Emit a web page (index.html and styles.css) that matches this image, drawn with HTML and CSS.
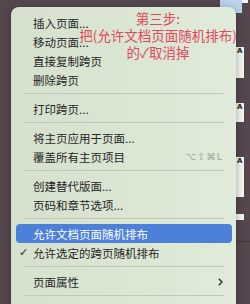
FILE: index.html
```html
<!DOCTYPE html>
<html lang="zh">
<head>
<meta charset="utf-8">
<link rel="stylesheet" href="styles.css">
</head>
<body>
<div class="screen">
  <div class="pages">
    <div class="thumb-blue"></div>
    <div class="thumb-white"></div>
    <div class="strip s1"><span>A</span></div>
    <div class="strip s2"><span>A</span></div>
    <div class="strip s3"><span>A</span></div>
    <div class="strip s4"></div>
    <div class="hline"></div>
  </div>
  <div class="menu">
    <div class="item">插入页面...</div>
    <div class="item">移动页面...</div>
    <div class="item">直接复制跨页</div>
    <div class="item">删除跨页</div>
    <div class="sep"></div>
    <div class="item">打印跨页...</div>
    <div class="sep"></div>
    <div class="item">将主页应用于页面...</div>
    <div class="item"><span class="label">覆盖所有主页项目</span><span class="shortcut">⌥⇧⌘L</span></div>
    <div class="sep"></div>
    <div class="item">创建替代版面...</div>
    <div class="item">页码和章节选项...</div>
    <div class="sep"></div>
    <div class="item active">允许文档页面随机排布</div>
    <div class="item"><span class="check">✓</span>允许选定的跨页随机排布</div>
    <div class="sep"></div>
    <div class="item"><span class="label">页面属性</span><svg class="chev" width="5" height="8" viewBox="0 0 5 8"><path d="M0.8 0.8 L4 4 L0.8 7.2" fill="none" stroke="#2a2a2a" stroke-width="1.3"/></svg></div>
    <div class="sep"></div>
  </div>
  <div class="note">
    <div>第三步:</div>
    <div>把(允许文档页面随机排布)</div>
    <div>的✓取消掉</div>
  </div>
</div>
</body>
</html>
```
FILE: styles.css
```css
html, body {
  margin: 0;
  padding: 0;
}
body {
  width: 250px;
  height: 304px;
  overflow: hidden;
  background: #56474f;
  font-family: "Noto Sans CJK SC", "Noto Sans", sans-serif;
}
.screen {
  position: relative;
  width: 250px;
  height: 304px;
  overflow: hidden;
  background: #56474f;
}
.pages {
  position: absolute;
  left: 215px;
  top: 0;
  width: 35px;
  height: 304px;
}
.thumb-blue {
  position: absolute;
  left: 5px;
  top: 0;
  width: 22px;
  height: 13px;
  background: #b9d3ea;
}
.thumb-white {
  position: absolute;
  left: 27px;
  top: 0;
  width: 6px;
  height: 3px;
  background: #f3f3f3;
}
.strip {
  position: absolute;
  left: 21px;
  width: 8px;
  background: #f4f6f0;
}
.strip span {
  display: block;
  font: bold 7px "DejaVu Sans", sans-serif;
  color: #222;
  padding-left: 1px;
  line-height: 8px;
}
.s1 { top: 47px; height: 31px; }
.s2 { top: 103px; height: 19px; }
.s3 { top: 157px; height: 40px; }
.s4 { top: 214px; height: 6px; }
.hline {
  position: absolute;
  left: 21px;
  top: 241px;
  width: 14px;
  height: 1px;
  background: #3e3339;
}
.menu {
  position: absolute;
  left: 11px;
  top: 7px;
  width: 225px;
  height: 310px;
  box-sizing: border-box;
  padding-top: 6px;
  border-radius: 8px;
  background: linear-gradient(90deg, #d6e1cd 0%, #dbe6d3 60%, #e0ebd9 100%);
  box-shadow: 0 2px 8px rgba(0, 0, 0, 0.35);
}
.item {
  position: relative;
  display: flex;
  align-items: center;
  height: 19px;
  margin: 0 4px 0 5px;
  padding: 0 9px 0 17px;
  border-radius: 4px;
  font-size: 11.5px;
  color: #262626;
  white-space: nowrap;
}
.item .label {
  flex: 1;
}
.item.active {
  background: #4d80d8;
  color: #ffffff;
}
.check {
  position: absolute;
  left: 3px;
  top: 0;
  line-height: 19px;
  font-size: 11px;
  font-family: "DejaVu Sans", sans-serif;
}
.shortcut {
  font-family: "DejaVu Sans", sans-serif;
  font-size: 9.5px;
  letter-spacing: 1px;
  color: #9ea398;
}
.chev {
  display: block;
}
.sep {
  height: 1px;
  margin: 4px 12px 5px 13px;
  background: #c1cab9;
}
.note {
  position: absolute;
  left: 68px;
  top: 10px;
  width: 180px;
  text-align: center;
  color: #e2475d;
  font-size: 13.5px;
  line-height: 17px;
}
```
